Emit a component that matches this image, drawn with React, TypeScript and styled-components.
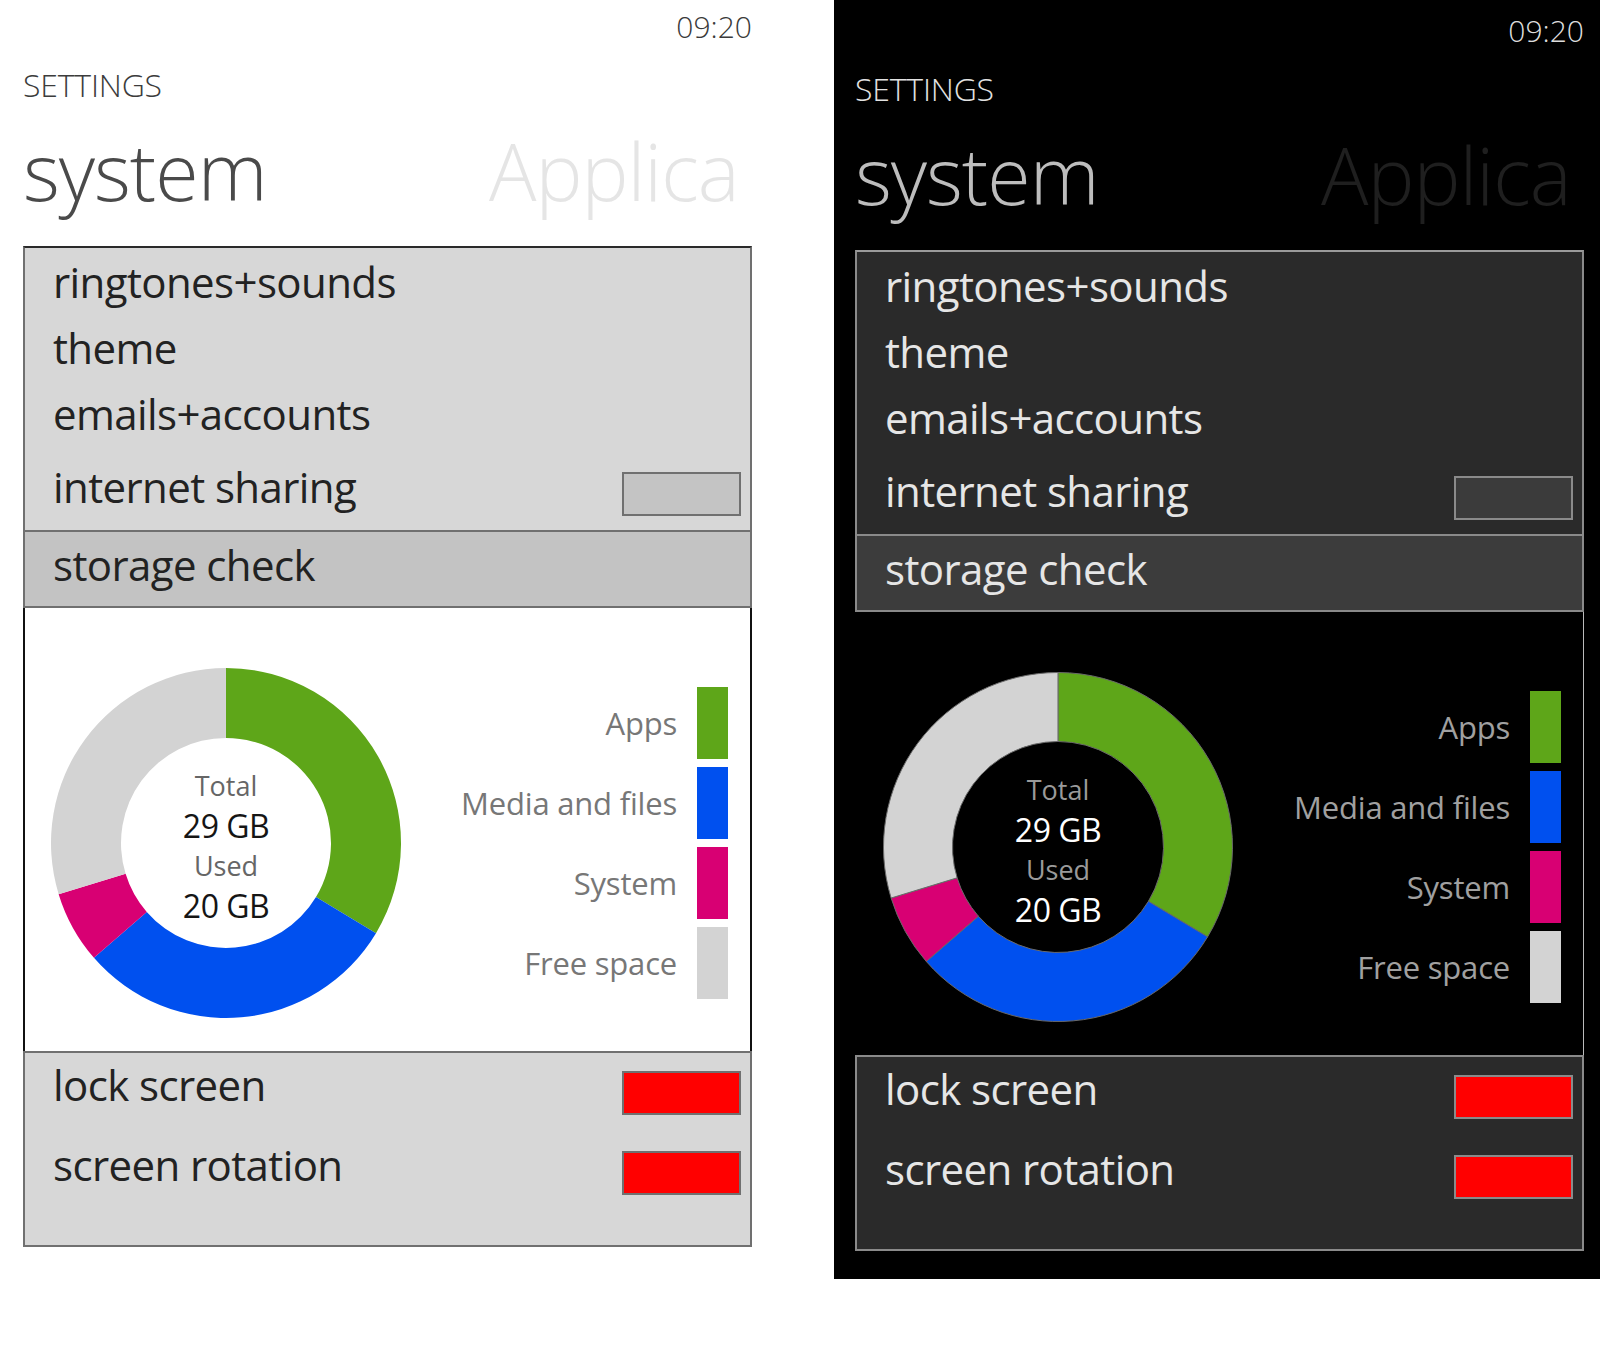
import React from 'react';
import styled, { createGlobalStyle, ThemeProvider } from 'styled-components';

interface Palette {
  screen: string;
  inset: string;
  time: string;
  caption: string;
  title: string;
  nextTitle: string;
  item: string;
  groupBg: string;
  groupBorder: string;
  groupTop: string;
  activeBg: string;
  toggleBg: string;
  toggleBorder: string;
  chartBg: string;
  chartLeft: string;
  chartRight: string;
  legend: string;
  centerLabel: string;
  centerValue: string;
  ringEdge: string;
}

const LIGHT: Palette = {
  screen: '#ffffff',
  inset: '0 82px 0 23px',
  time: '#3a3a3a',
  caption: '#3c3c3c',
  title: '#4a4a4a',
  nextTitle: '#e5e5e5',
  item: '#222222',
  groupBg: '#d7d7d7',
  groupBorder: '#707070',
  groupTop: '#2a2a2a',
  activeBg: '#c3c3c3',
  toggleBg: '#c4c4c4',
  toggleBorder: '#707070',
  chartBg: '#ffffff',
  chartLeft: '2px solid #111111',
  chartRight: '2px solid #111111',
  legend: '#777777',
  centerLabel: '#666666',
  centerValue: '#151515',
  ringEdge: 'none',
};

const DARK: Palette = {
  screen: '#000000',
  inset: '4px 16px 0 21px',
  time: '#dddddd',
  caption: '#e2e2e2',
  title: '#bdbdbd',
  nextTitle: '#1f1f1f',
  item: '#e6e6e6',
  groupBg: '#2a2a2a',
  groupBorder: '#8a8a8a',
  groupTop: '#9a9a9a',
  activeBg: '#3c3c3c',
  toggleBg: '#3b3b3b',
  toggleBorder: '#8a8a8a',
  chartBg: '#000000',
  chartLeft: '2px solid #000000',
  chartRight: '1px solid #bbbbbb',
  legend: '#a0a0a0',
  centerLabel: '#9a9a9a',
  centerValue: '#ffffff',
  ringEdge: '#6a6a6a',
};

const SEGMENTS = [
  { label: 'Apps', color: '#5ea619', from: 0, to: 121 },
  { label: 'Media and files', color: '#0050ef', from: 121, to: 229 },
  { label: 'System', color: '#d80073', from: 229, to: 253 },
  { label: 'Free space', color: '#d3d3d3', from: 253, to: 360 },
];

const GlobalStyle = createGlobalStyle`
  html, body {
    margin: 0;
    padding: 0;
    background: #ffffff;
  }
  body {
    font-family: 'Open Sans', 'Noto Sans', 'Liberation Sans', sans-serif;
  }
`;

const Page = styled.div`
  display: flex;
  align-items: flex-start;
  width: 1600px;
`;

const Phone = styled.div<{ $width: number }>`
  box-sizing: border-box;
  width: ${({ $width }) => $width}px;
  min-height: 1279px;
  padding: ${({ theme }) => theme.inset};
  background: ${({ theme }) => theme.screen};
`;

const Screen = styled.div`
  width: 729px;
  display: flex;
  flex-direction: column;
`;

const StatusBar = styled.div`
  padding-top: 7px;
  text-align: right;
  font-size: 30px;
  line-height: 40px;
  font-weight: 300;
  color: ${({ theme }) => theme.time};
`;

const Caption = styled.div`
  margin-top: 18px;
  font-size: 32px;
  line-height: 40px;
  font-weight: 300;
  letter-spacing: -0.2px;
  color: ${({ theme }) => theme.caption};
`;

const Pivot = styled.div`
  margin-top: 21px;
  display: grid;
  grid-template-columns: 466px 1fr;
  font-size: 79px;
  line-height: 90px;
  font-weight: 300;
  letter-spacing: -1px;
  white-space: nowrap;
`;

const PivotTitle = styled.span<{ $current?: boolean }>`
  color: ${({ theme, $current }) => ($current ? theme.title : theme.nextTitle)};
`;

const Group = styled.div`
  margin-top: 30px;
  padding-top: 1px;
  background: ${({ theme }) => theme.groupBg};
  border: 2px solid ${({ theme }) => theme.groupBorder};
  border-top-color: ${({ theme }) => theme.groupTop};
`;

const BottomGroup = styled.div`
  padding-bottom: 32px;
  background: ${({ theme }) => theme.groupBg};
  border: 2px solid ${({ theme }) => theme.groupBorder};
`;

const Row = styled.div<{ $h: number; $top?: number }>`
  box-sizing: border-box;
  height: ${({ $h }) => $h}px;
  padding: ${({ $top = 0 }) => $top}px 9px 0 28px;
  display: flex;
  align-items: center;
  justify-content: space-between;
`;

const ActiveRow = styled(Row)`
  background: ${({ theme }) => theme.activeBg};
  border-top: 2px solid ${({ theme }) => theme.groupBorder};
`;

const Label = styled.span<{ $lift?: number }>`
  padding-bottom: ${({ $lift = 0 }) => $lift}px;
  font-size: 42px;
  line-height: 66px;
  font-weight: 400;
  letter-spacing: -0.6px;
  white-space: nowrap;
  color: ${({ theme }) => theme.item};
`;

const Toggle = styled.span<{ $on?: boolean }>`
  box-sizing: border-box;
  flex: none;
  width: 119px;
  height: 44px;
  border: 2px solid ${({ theme }) => theme.toggleBorder};
  background: ${({ theme, $on }) => ($on ? '#ff0000' : theme.toggleBg)};
`;

const ChartPanel = styled.div`
  box-sizing: border-box;
  height: 443px;
  padding: 60px 22px 33px 26px;
  display: flex;
  align-items: center;
  justify-content: space-between;
  background: ${({ theme }) => theme.chartBg};
  border-left: ${({ theme }) => theme.chartLeft};
  border-right: ${({ theme }) => theme.chartRight};
`;

const Donut = styled.div`
  display: grid;
  width: 350px;
  height: 350px;

  & > * {
    grid-area: 1 / 1;
  }
`;

const DonutCenter = styled.div`
  align-self: center;
  justify-self: center;
  display: flex;
  flex-direction: column;
  align-items: center;
  white-space: nowrap;
`;

const CenterLabel = styled.span`
  font-size: 27px;
  line-height: 46px;
  font-weight: 400;
  color: ${({ theme }) => theme.centerLabel};
`;

const CenterValue = styled.span`
  font-size: 32px;
  line-height: 34px;
  font-weight: 400;
  letter-spacing: -0.5px;
  color: ${({ theme }) => theme.centerValue};
`;

const Legend = styled.div`
  display: flex;
  flex-direction: column;
  gap: 8px;
`;

const LegendRow = styled.div`
  display: flex;
  align-items: center;
  justify-content: flex-end;
  gap: 20px;
`;

const LegendLabel = styled.span`
  font-size: 31px;
  font-weight: 400;
  letter-spacing: -0.2px;
  color: ${({ theme }) => theme.legend};
`;

const Swatch = styled.span<{ $color: string }>`
  width: 31px;
  height: 72px;
  background: ${({ $color }) => $color};
`;

const point = (r: number, deg: number) => {
  const a = (deg * Math.PI) / 180;
  return `${(175 + r * Math.sin(a)).toFixed(2)} ${(175 - r * Math.cos(a)).toFixed(2)}`;
};

const arcPath = (from: number, to: number, ro = 175, ri = 105) => {
  const end = to >= 360 ? 359.99 : to;
  const large = end - from > 180 ? 1 : 0;
  return [
    `M ${point(ro, from)}`,
    `A ${ro} ${ro} 0 ${large} 1 ${point(ro, end)}`,
    `L ${point(ri, end)}`,
    `A ${ri} ${ri} 0 ${large} 0 ${point(ri, from)}`,
    'Z',
  ].join(' ');
};

const StorageChart = ({ edge }: { edge: string }) => {
  const outlined = edge !== 'none';
  return (
    <ChartPanel>
      <Donut>
        <svg width="350" height="350" viewBox="0 0 350 350">
          {SEGMENTS.map((s) => (
            <path
              key={s.label}
              d={arcPath(s.from, s.to, outlined ? 174.5 : 175, outlined ? 105.5 : 105)}
              fill={s.color}
              stroke={outlined ? edge : 'none'}
              strokeWidth={outlined ? 1 : 0}
            />
          ))}
        </svg>
        <DonutCenter>
          <CenterLabel>Total</CenterLabel>
          <CenterValue>29 GB</CenterValue>
          <CenterLabel>Used</CenterLabel>
          <CenterValue>20 GB</CenterValue>
        </DonutCenter>
      </Donut>
      <Legend>
        {SEGMENTS.map((s) => (
          <LegendRow key={s.label}>
            <LegendLabel>{s.label}</LegendLabel>
            <Swatch $color={s.color} />
          </LegendRow>
        ))}
      </Legend>
    </ChartPanel>
  );
};

const SettingsScreen = ({ palette, width }: { palette: Palette; width: number }) => (
  <ThemeProvider theme={palette}>
    <Phone $width={width}>
      <Screen>
        <StatusBar>09:20</StatusBar>
        <Caption>SETTINGS</Caption>
        <Pivot>
          <PivotTitle $current>system</PivotTitle>
          <PivotTitle>Applica</PivotTitle>
        </Pivot>

        <Group>
          <Row $h={66}>
            <Label>ringtones+sounds</Label>
          </Row>
          <Row $h={66}>
            <Label>theme</Label>
          </Row>
          <Row $h={66}>
            <Label>emails+accounts</Label>
          </Row>
          <Row $h={83} $top={10}>
            <Label $lift={14}>internet sharing</Label>
            <Toggle />
          </Row>
          <ActiveRow $h={76}>
            <Label $lift={8}>storage check</Label>
          </ActiveRow>
        </Group>

        <StorageChart edge={palette.ringEdge} />

        <BottomGroup>
          <Row $h={80}>
            <Label $lift={16}>lock screen</Label>
            <Toggle $on />
          </Row>
          <Row $h={80}>
            <Label $lift={16}>screen rotation</Label>
            <Toggle $on />
          </Row>
        </BottomGroup>
      </Screen>
    </Phone>
  </ThemeProvider>
);

export default function App() {
  return (
    <>
      <GlobalStyle />
      <Page>
        <SettingsScreen palette={LIGHT} width={834} />
        <SettingsScreen palette={DARK} width={766} />
      </Page>
    </>
  );
}
